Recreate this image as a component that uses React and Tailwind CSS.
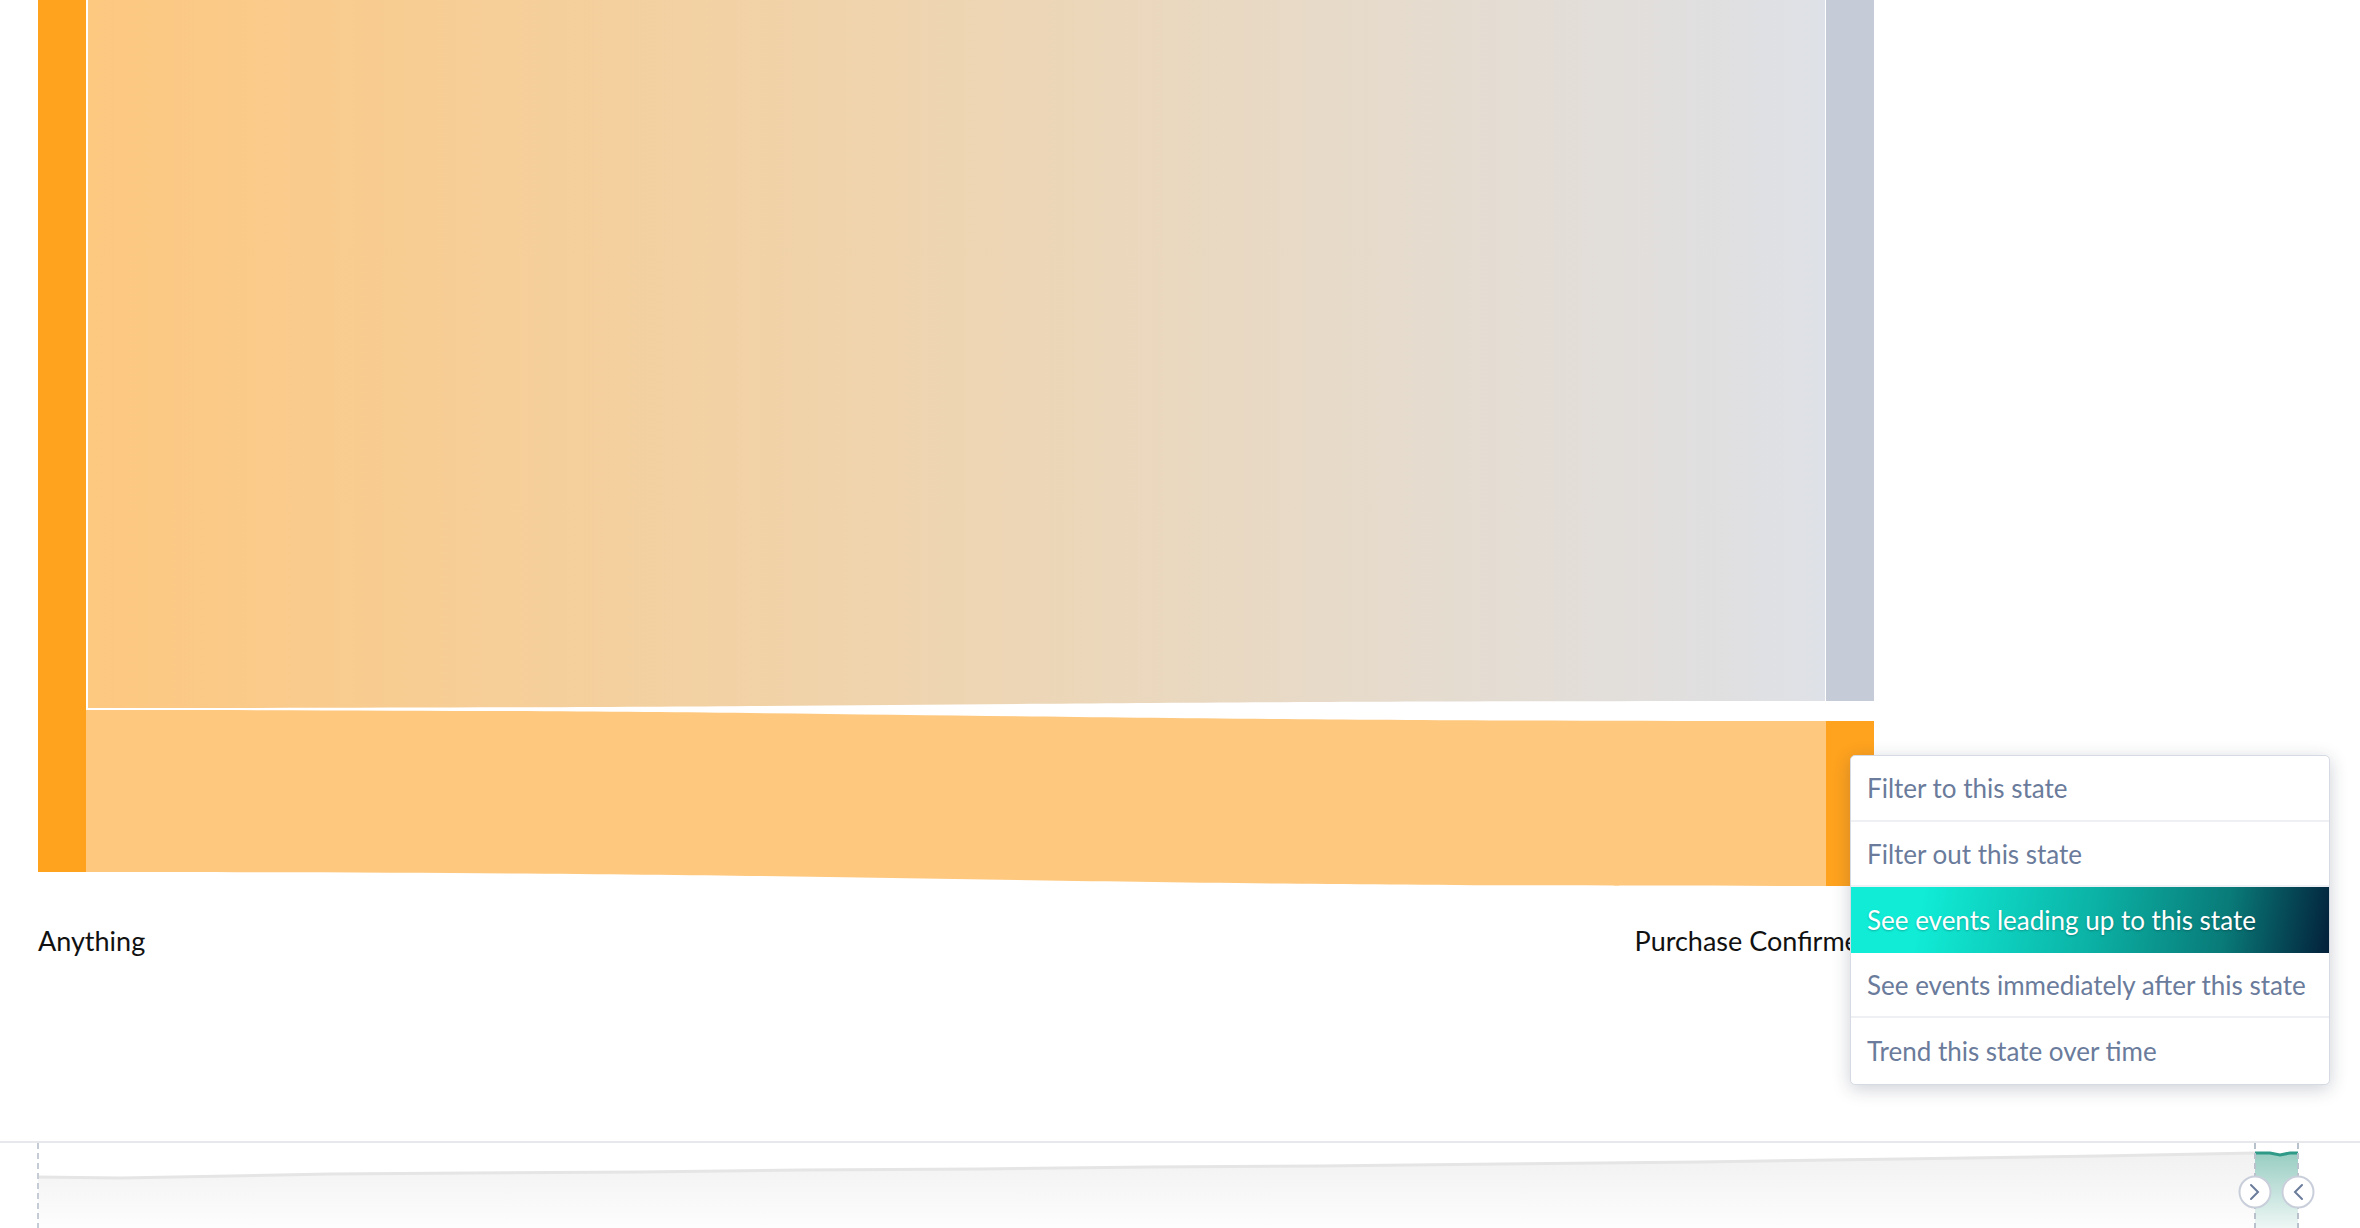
const menuItems = [
  'Filter to this state',
  'Filter out this state',
  'See events leading up to this state',
  'See events immediately after this state',
  'Trend this state over time',
]

function Sankey() {
  return (
    <svg width="2360" height="886" className="block">
      <defs>
        <linearGradient id="topLink" x1="0" y1="0" x2="1" y2="0">
          <stop offset="0" stopColor="#fdc880" />
          <stop offset="0.5" stopColor="#eed5b2" />
          <stop offset="1" stopColor="#dee1e7" />
        </linearGradient>
      </defs>
      <rect x="38" y="0" width="48" height="872" fill="#ffa21e" />
      <path d="M88,0 L1825,0 L1825,701 C956,701 956,708 88,708 Z" fill="url(#topLink)" />
      <path d="M86,710 C956,710 956,721 1826,721 L1826,886 C956,886 956,872 86,872 Z" fill="#fec87e" />
      <rect x="1826" y="0" width="48" height="701" fill="#c6ccd7" />
      <rect x="1826" y="721" width="48" height="165" fill="#ffa21e" />
    </svg>
  )
}

function Timeline() {
  return (
    <svg width="2360" height="85" className="block">
      <defs>
        <linearGradient id="greyArea" x1="0" y1="0" x2="0" y2="1">
          <stop offset="0" stopColor="#f1f1f1" />
          <stop offset="1" stopColor="#fdfdfd" />
        </linearGradient>
        <linearGradient id="tealArea" x1="0" y1="0" x2="0" y2="1">
          <stop offset="0" stopColor="#98cdc2" />
          <stop offset="1" stopColor="#eef7f5" />
        </linearGradient>
      </defs>
      <path
        d="M38,34 L120,35 L230,33 L330,31 L470,30 L640,29 L800,27 L980,26 L1150,24 L1320,23 L1500,21 L1700,19 L1900,16 L2100,13 L2255,10 L2255,85 L38,85 Z"
        fill="url(#greyArea)"
      />
      <path
        d="M38,34 L120,35 L230,33 L330,31 L470,30 L640,29 L800,27 L980,26 L1150,24 L1320,23 L1500,21 L1700,19 L1900,16 L2100,13 L2255,10"
        fill="none"
        stroke="#e5e5e5"
        strokeWidth="3"
      />
      <path d="M2255,10 L2270,10 L2280,12 L2290,10 L2298,10 L2298,85 L2255,85 Z" fill="url(#tealArea)" />
      <path d="M2255,10 L2270,10 L2280,12 L2290,10 L2298,10" fill="none" stroke="#2f9a88" strokeWidth="3" />
      <line x1="38" y1="0" x2="38" y2="85" stroke="#c6ccd6" strokeWidth="2" strokeDasharray="6 4" />
      <line x1="2255" y1="0" x2="2255" y2="85" stroke="#b9c1cd" strokeWidth="2" strokeDasharray="6 4" />
      <line x1="2298" y1="0" x2="2298" y2="85" stroke="#b9c1cd" strokeWidth="2" strokeDasharray="6 4" />
      <circle cx="2255" cy="49" r="15.5" fill="#fff" stroke="#c9cfda" strokeWidth="2" />
      <path d="M2251,42 L2258,49 L2251,56" fill="none" stroke="#6b7c9b" strokeWidth="2" strokeLinecap="round" />
      <circle cx="2298" cy="49" r="15.5" fill="#fff" stroke="#c9cfda" strokeWidth="2" />
      <path d="M2302,42 L2295,49 L2302,56" fill="none" stroke="#6b7c9b" strokeWidth="2" strokeLinecap="round" />
    </svg>
  )
}

export default function App() {
  return (
    <div
      className="relative flex h-[1228px] w-[2360px] flex-col overflow-hidden bg-white"
      style={{ fontFamily: '"Source Sans Pro", Lato, "Noto Sans", sans-serif' }}
    >
      <Sankey />
      <div className="mt-[38px] flex w-[1874px] justify-between pl-[38px] text-[27px] leading-[34px] text-[#111]">
        <span>Anything</span>
        <span>Purchase Confirmed</span>
      </div>
      <div className="mt-auto h-[87px] border-t-2 border-[#e6e8ec]">
        <Timeline />
      </div>

      <div className="absolute left-[1850px] top-[755px] w-[480px] overflow-hidden rounded-[5px] border border-[#d6dbe3] bg-white shadow-[0_4px_18px_rgba(30,40,70,0.22)]">
        {menuItems.map((label, i) => (
          <div
            key={label}
            className={
              i === 2
                ? 'flex h-[65.5px] items-center whitespace-nowrap bg-[linear-gradient(100deg,#10ecd6_15%,#0bb3a6_50%,#097a78_78%,#03203a_100%)] px-4 pt-[2px] text-[26px] text-white [text-shadow:0_1px_2px_rgba(0,0,0,0.25)]'
                : 'flex h-[65.5px] items-center whitespace-nowrap border-b-2 border-[#eef0f3] px-4 pt-[2px] text-[26px] text-[#6a7b9b] last:border-b-0'
            }
          >
            {label}
          </div>
        ))}
      </div>
    </div>
  )
}
